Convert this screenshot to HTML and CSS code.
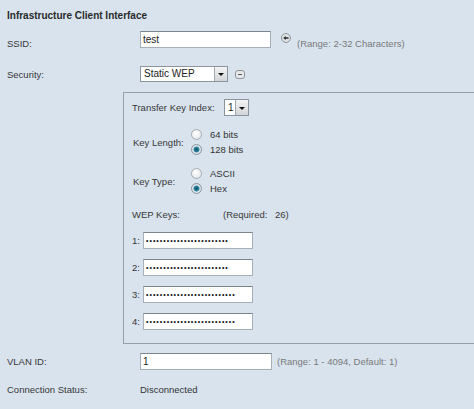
FILE: index.html
```html
<!DOCTYPE html>
<html lang="en">
<head>
<meta charset="UTF-8" />
<title>Infrastructure Client Interface</title>
<link rel="stylesheet" href="styles.css">
</head>
<body>

<div class="page">
  <h3 class="title">Infrastructure Client Interface</h3>

  <!-- SSID -->
  <div class="row row-ssid">
    <span class="lbl">SSID:</span>
    <input class="txt ssid" type="text" value="test" />
    <svg class="icon-back" width="10" height="10" viewBox="0 0 10 10">
      <circle cx="5" cy="5" r="4.5" fill="#dfe2e5" stroke="#8f9498" stroke-width="1"/>
      <path d="M2.2 5 L4.8 2.9 V4.2 H7.6 V5.8 H4.8 V7.1 Z" fill="#2e2e2e"/>
    </svg>
    <span class="hint">(Range: 2-32 Characters)</span>
  </div>

  <!-- Security -->
  <div class="row row-sec">
    <span class="lbl">Security:</span>
    <div class="sel sel-sec">
      <span class="sel-val">Static WEP</span>
      <span class="sel-btn"></span>
    </div>
    <svg class="icon-minus" width="10" height="9" viewBox="0 0 10 9">
      <rect x="0.5" y="0.5" width="9" height="8" rx="2.5" fill="#e6e8ea" stroke="#8e9296"/>
      <line x1="3" y1="4.5" x2="7" y2="4.5" stroke="#555" stroke-width="1"/>
    </svg>
  </div>

  <!-- WEP settings box -->
  <div class="wep-box">
    <div class="wep-row">
      <span class="tki">Transfer Key Index:</span>
      <div class="sel sel-idx">
        <span class="sel-val">1</span>
        <span class="sel-btn"></span>
      </div>
    </div>

    <div class="wep-group grp-len">
      <span class="glbl">Key Length:</span>
      <div class="opts">
        <label class="opt"><input type="radio" name="keylen" /> 64 bits</label>
        <label class="opt"><input type="radio" name="keylen" checked /> 128 bits</label>
      </div>
    </div>

    <div class="wep-group grp-type">
      <span class="glbl">Key Type:</span>
      <div class="opts">
        <label class="opt"><input type="radio" name="keytype" /> ASCII</label>
        <label class="opt"><input type="radio" name="keytype" checked /> Hex</label>
      </div>
    </div>

    <div class="keys-head">
      <span class="kh-lbl">WEP Keys:</span>
      <span class="kh-req">(Required:</span>
      <span>26)</span>
    </div>

    <div class="key-row"><span class="kn">1:</span><input class="txt key-in" type="password" value="aaaaaaaaaaaaaaaaaaaaaaaa" /></div>
    <div class="key-row"><span class="kn">2:</span><input class="txt key-in" type="password" value="aaaaaaaaaaaaaaaaaaaaaaaa" /></div>
    <div class="key-row"><span class="kn">3:</span><input class="txt key-in" type="password" value="aaaaaaaaaaaaaaaaaaaaaaaaaa" /></div>
    <div class="key-row"><span class="kn">4:</span><input class="txt key-in" type="password" value="aaaaaaaaaaaaaaaaaaaaaaaaaa" /></div>
  </div>

  <!-- VLAN -->
  <div class="row row-vlan">
    <span class="lbl">VLAN ID:</span>
    <input class="txt vlan" type="text" value="1" />
    <span class="hint hint-vlan">(Range: 1 - 4094, Default: 1)</span>
  </div>

  <div class="row row-status">
    <span class="lbl">Connection Status:</span>
    <span class="status">Disconnected</span>
  </div>
</div>

</body>
</html>
```

FILE: styles.css
```css
html, body {
  margin: 0;
  height: 100%;
  overflow: hidden;
}

body {
  background: #d8e3ee;
  font-family: "Liberation Sans", Arial, sans-serif;
  font-size: 9.5px;
  color: #383838;
}

.page {
  padding-left: 7px;
}

.title {
  margin: 0;
  padding-top: 9px;
  font-size: 10px;
  line-height: 13px;
  font-weight: bold;
  color: #2a2a2a;
}

.row {
  display: flex;
  align-items: center;
  line-height: 13px;
}
.lbl {
  width: 133px;
  flex: none;
}

/* text inputs */
.txt {
  box-sizing: border-box;
  height: 17px;
  margin: 0;
  padding: 0 2px;
  border: 1px solid #a7b0b8;
  border-top-color: #7d858c;
  background: #fff;
  font-family: "Liberation Sans", Arial, sans-serif;
  font-size: 10px;
  color: #222;
  outline: none;
}

.row-ssid {
  margin-top: 9px;
  align-items: flex-start;
}
.row-ssid .lbl,
.row-ssid .hint {
  margin-top: 6px;
}
.ssid {
  width: 131px;
}
.icon-back {
  margin: 2px 0 0 10px;
  flex: none;
}
.hint {
  margin-left: 6px;
  color: #7a7a7a;
}

.row-sec {
  margin-top: 16px;
}

/* fake select boxes */
.sel {
  display: flex;
  box-sizing: border-box;
  height: 16px;
  border: 1px solid #8c959d;
  background: #fff;
}
.sel-val {
  flex: 1;
  padding-left: 3px;
  line-height: 14px;
  font-size: 10px;
  color: #222;
}
.sel-btn {
  position: relative;
  width: 12px;
  border-left: 1px solid #a3a9ae;
  background: linear-gradient(#f4f4f4, #d2d5d8);
}
.sel-btn::after {
  content: "";
  position: absolute;
  left: 3px;
  top: 6px;
  border-left: 3px solid transparent;
  border-right: 3px solid transparent;
  border-top: 3px solid #111;
}
.sel-sec {
  width: 88px;
}
.icon-minus {
  margin-left: 7px;
  flex: none;
}

/* WEP box */
.wep-box {
  margin: 10px 0 0 116px;
  padding: 6px 0 13px 8px;
  border: 1px solid #959fa9;
  border-right: none;
  line-height: 13px;
}
.wep-row {
  display: flex;
  align-items: center;
  height: 17px;
}
.tki {
  width: 92px;
}
.sel-idx {
  width: 25px;
  height: 17px;
}
.sel-idx .sel-val {
  line-height: 15px;
}
.sel-idx .sel-btn::after {
  top: 7px;
}

.wep-group {
  display: flex;
  align-items: center;
}
.grp-len {
  margin-top: 11px;
}
.grp-type {
  margin-top: 9px;
}
.glbl {
  width: 58px;
  padding-left: 1px;
}
.opts {
  display: flex;
  flex-direction: column;
}
.opt {
  display: flex;
  align-items: center;
  height: 15px;
  color: #333;
}
.opt input {
  appearance: none;
  -webkit-appearance: none;
  width: 11px;
  height: 11px;
  margin: 0 8px 0 0;
  border: 1px solid #a5abb1;
  border-radius: 50%;
  background: radial-gradient(circle at 40% 35%, #ffffff, #dde2e6);
}
.opt input:checked {
  border-color: #8a939b;
  background: radial-gradient(circle, #0f4c60 0, #2d8aa5 2.6px, #e4eaee 3.4px, #c9d1d7 100%);
}

.keys-head {
  display: flex;
  margin-top: 12px;
}
.kh-lbl {
  width: 91px;
}
.kh-req {
  width: 52px;
}

.key-row {
  display: flex;
  align-items: center;
  margin-top: 10px;
}
.keys-head + .key-row {
  margin-top: 11px;
}
.kn {
  width: 11px;
}
.key-in {
  width: 110px;
  padding-left: 2px;
  font-size: 7px;
  letter-spacing: 1px;
  color: #111;
}

.row-vlan {
  margin-top: 9px;
}
.vlan {
  width: 132px;
}
.hint-vlan {
  margin-left: 5px;
}

.row-status {
  margin-top: 13px;
}
.status {
  color: #333;
}
```
